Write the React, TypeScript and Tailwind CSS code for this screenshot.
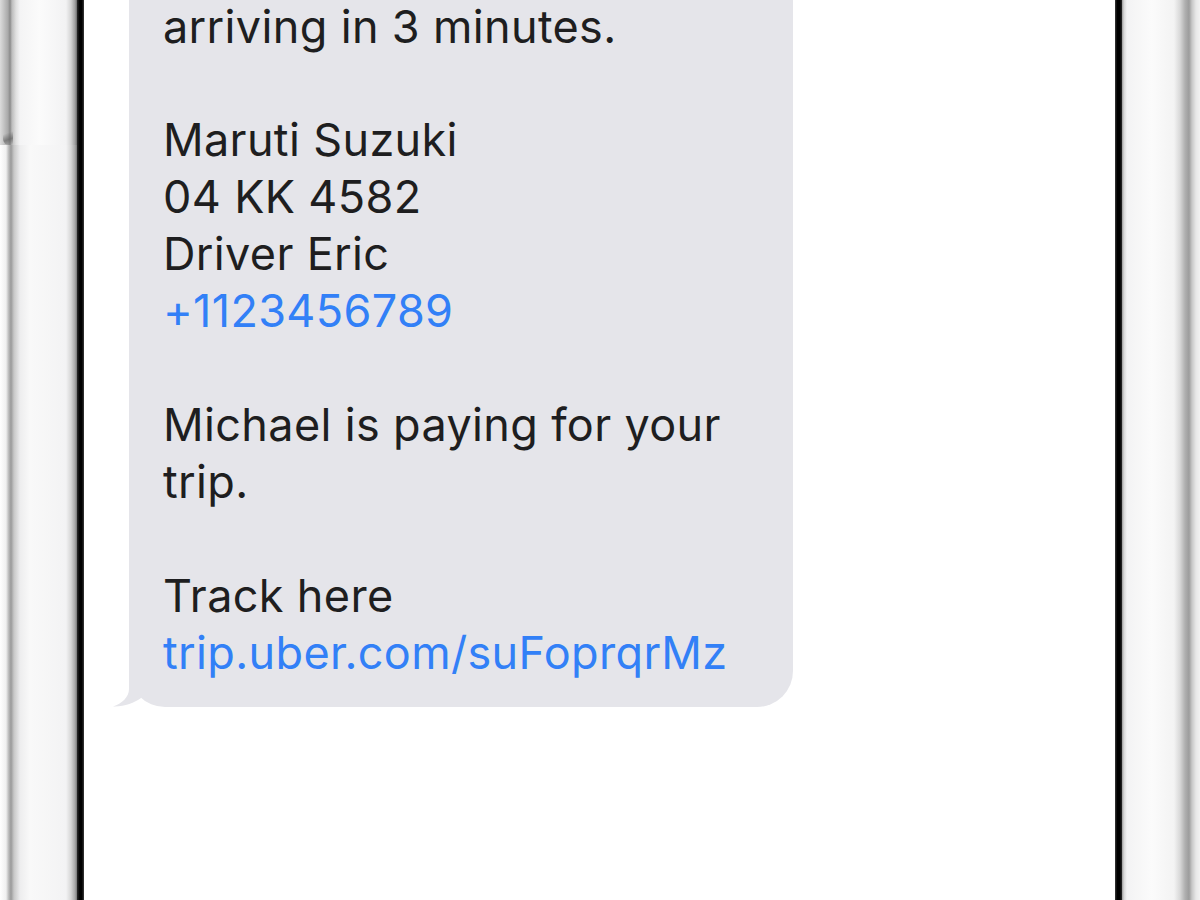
import React from "react";

const lines: { text: string; link?: boolean }[] = [
  { text: "arriving in 3 minutes." },
  { text: "" },
  { text: "Maruti Suzuki" },
  { text: "04 KK 4582" },
  { text: "Driver Eric" },
  { text: "+1123456789", link: true },
  { text: "" },
  { text: "Michael is paying for your" },
  { text: "trip." },
  { text: "" },
  { text: "Track here" },
  { text: "trip.uber.com/suFoprqrMz", link: true },
];

function Bubble() {
  return (
    <div className="relative -mt-[40px] w-[664px] rounded-[36px] bg-[#e5e5ea] pb-[26px] pl-[34px] pr-[30px] pt-[40px]">
      <div className="relative z-10 font-['Inter',sans-serif] text-[45px] leading-[57px] tracking-[0.35px] text-[#1e1e20]">
        {lines.map((line, i) =>
          line.text === "" ? (
            <div key={i} className="h-[57px]" />
          ) : i === 0 ? (
            <div key={i} className="leading-[54px]">
              {line.text}
            </div>
          ) : (
            <div key={i} className={line.link ? "text-[#3280f7]" : undefined}>
              {line.text}
            </div>
          ),
        )}
      </div>
      {/* tail */}
      <svg
        aria-hidden="true"
        width="40"
        height="42"
        viewBox="0 0 40 42"
        className="absolute -left-[16px] bottom-0"
      >
        <path
          d="M16 0 L16 24 C16 32 9 38.5 0 41.5 C11 42 21 38 28 33 L28 0 Z"
          fill="#e5e5ea"
        />
      </svg>
    </div>
  );
}

export default function App() {
  return (
    <div className="flex h-[900px] w-[1200px] overflow-hidden bg-white">
      {/* left bezel */}
      <div className="flex w-[77px] flex-col">
        <div className="relative h-[145px] bg-[linear-gradient(to_right,#dcdcdc_0px,#c9c9c9_3px,#a9a9a9_8px,#8a8a8a_10px,#bdbdbd_12px,#e0e0e0_16px,#f4f4f5_20px,#fbfbfb_40px,#f2f2f3_66px,#d4d4d4_71px,#a0a0a0_75px,#6b6b6b_77px)]">
          <div className="absolute bottom-0 left-[3px] h-[14px] w-[10px] rounded-bl-[6px] bg-[linear-gradient(160deg,#ffffff00_20%,#55555599_60%,#ffffff00_100%)]" />
        </div>
        <div className="flex-1 bg-[linear-gradient(to_right,#ffffff_0px,#f0f0f0_6px,#b5b5b5_9px,#9a9a9a_11px,#c8c8c8_14px,#ededee_20px,#f9f9f9_30px,#f3f3f4_66px,#d6d6d6_71px,#a8a8a8_75px,#777777_77px)]" />
      </div>
      <div className="w-[7px] bg-[linear-gradient(to_right,#2a2a2a,#000000_40%,#000000_70%,#3a3a3a)]" />

      {/* screen */}
      <div className="flex-1 overflow-hidden bg-white pl-[45px]">
        <Bubble />
      </div>

      <div className="w-[7px] bg-[linear-gradient(to_right,#3a3a3a,#000000_30%,#000000_70%,#2a2a2a)]" />
      {/* right bezel */}
      <div className="w-[78px] bg-[linear-gradient(to_right,#9a9a9a_0px,#d8d8d8_2px,#f3f3f4_5px,#fbfbfb_30px,#f3f3f3_52px,#d8d8d8_58px,#b0b0b0_63px,#9c9c9c_67px,#c8c8c8_70px,#e8e8e8_74px,#f2f2f2_78px)]" />
    </div>
  );
}
